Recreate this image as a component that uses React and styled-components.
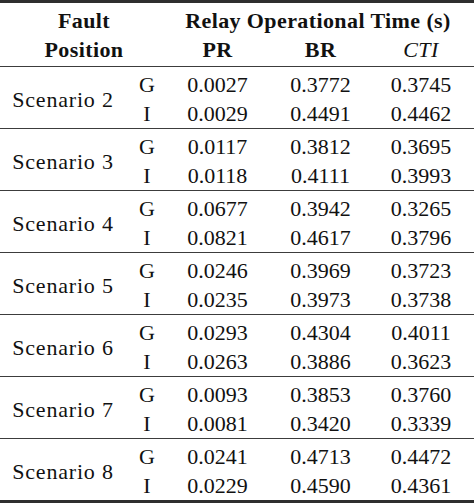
import React from "react";
import styled, { createGlobalStyle } from "styled-components";

const GlobalStyle = createGlobalStyle`
  html, body {
    margin: 0;
    padding: 0;
    background: #ffffff;
  }
`;

const COLUMNS = "126px 42px 99px 107px 94px 1fr";

const Table = styled.div`
  width: 474px;
  font-family: "Liberation Serif", "Times New Roman", serif;
  font-size: 22px;
  color: #111111;
  border-top: 3px solid #2e2e2e;
  border-bottom: 3px solid #2e2e2e;
`;

const Head = styled.div`
  display: grid;
  grid-template-columns: ${COLUMNS};
  grid-auto-rows: 29px;
  padding: 3px 0 2px;
  line-height: 29px;
  font-weight: bold;
  letter-spacing: 0.4px;
`;

const HeadCell = styled.div`
  grid-column: ${(props) => props.$span || "auto"};
  text-align: center;
  white-space: nowrap;
  font-style: ${(props) => (props.$italic ? "italic" : "normal")};
  font-weight: ${(props) => (props.$italic ? "normal" : "bold")};
`;

const Group = styled.div`
  display: grid;
  grid-template-columns: ${COLUMNS};
  grid-auto-rows: 29px;
  padding-top: 3px;
  line-height: 29px;
  border-top: 1px solid #3c3c3c;
`;

const Scenario = styled.div`
  grid-column: 1;
  grid-row: 1 / span 2;
  align-self: center;
  text-align: center;
  white-space: nowrap;
  letter-spacing: 0.8px;
`;

const Kind = styled.div`
  grid-column: 2;
  text-align: center;
`;

const Value = styled.div`
  text-align: center;
`;

const rows = [
  ["Scenario 2", ["0.0027", "0.3772", "0.3745"], ["0.0029", "0.4491", "0.4462"]],
  ["Scenario 3", ["0.0117", "0.3812", "0.3695"], ["0.0118", "0.4111", "0.3993"]],
  ["Scenario 4", ["0.0677", "0.3942", "0.3265"], ["0.0821", "0.4617", "0.3796"]],
  ["Scenario 5", ["0.0246", "0.3969", "0.3723"], ["0.0235", "0.3973", "0.3738"]],
  ["Scenario 6", ["0.0293", "0.4304", "0.4011"], ["0.0263", "0.3886", "0.3623"]],
  ["Scenario 7", ["0.0093", "0.3853", "0.3760"], ["0.0081", "0.3420", "0.3339"]],
  ["Scenario 8", ["0.0241", "0.4713", "0.4472"], ["0.0229", "0.4590", "0.4361"]],
];

const Line = ({ kind, values }) => (
  <>
    <Kind>{kind}</Kind>
    {values.map((v, i) => (
      <Value key={i}>{v}</Value>
    ))}
    <div />
  </>
);

const App = () => {
  return (
    <>
      <GlobalStyle />
      <Table>
        <Head>
          <HeadCell $span="1 / 3">Fault</HeadCell>
          <HeadCell $span="3 / 6">Relay Operational Time (s)</HeadCell>
          <div />
          <HeadCell $span="1 / 3">Position</HeadCell>
          <HeadCell>PR</HeadCell>
          <HeadCell>BR</HeadCell>
          <HeadCell $italic>CTI</HeadCell>
        </Head>
        {rows.map(([name, g, i]) => (
          <Group key={name}>
            <Scenario>{name}</Scenario>
            <Line kind="G" values={g} />
            <Line kind="I" values={i} />
          </Group>
        ))}
      </Table>
    </>
  );
};

export default App;
